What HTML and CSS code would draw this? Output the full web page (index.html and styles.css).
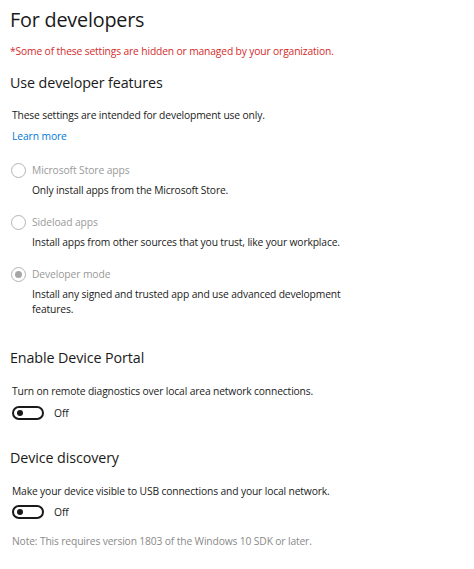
FILE: index.html
```html
<!DOCTYPE html>
<html>
<head>
<meta charset="utf-8">
<link rel="stylesheet" href="styles.css">
</head>
<body>
<div class="page">
  <h1 class="title">For developers</h1>
  <p class="warn">*Some of these settings are hidden or managed by your organization.</p>

  <h2 class="section">Use developer features</h2>
  <p class="text first">These settings are intended for development use only.</p>
  <a class="link">Learn more</a>

  <div class="options">
    <div class="option">
      <div class="radio-row"><span class="radio"></span><span class="rlabel">Microsoft Store apps</span></div>
      <p class="desc">Only install apps from the Microsoft Store.</p>
    </div>
    <div class="option">
      <div class="radio-row"><span class="radio"></span><span class="rlabel">Sideload apps</span></div>
      <p class="desc">Install apps from other sources that you trust, like your workplace.</p>
    </div>
    <div class="option">
      <div class="radio-row"><span class="radio checked"></span><span class="rlabel">Developer mode</span></div>
      <p class="desc">Install any signed and trusted app and use advanced development features.</p>
    </div>
  </div>

  <h2 class="section s2">Enable Device Portal</h2>
  <p class="text">Turn on remote diagnostics over local area network connections.</p>
  <div class="toggle-row portal"><span class="toggle"></span><span class="tlabel">Off</span></div>

  <h2 class="section s3">Device discovery</h2>
  <p class="text">Make your device visible to USB connections and your local network.</p>
  <div class="toggle-row"><span class="toggle"></span><span class="tlabel">Off</span></div>
  <p class="note">Note: This requires version 1803 of the Windows 10 SDK or later.</p>
</div>
</body>
</html>
```
FILE: styles.css
```css
html, body {
  margin: 0;
  padding: 0;
  background: #fff;
}
body {
  font-family: "Open Sans", "Noto Sans", sans-serif;
  color: #1a1a1a;
}
.page {
  padding: 0 10px;
  display: flex;
  flex-direction: column;
  align-items: flex-start;
}
.title {
  margin: 4px 0 0;
  font-size: 19.8px;
  font-weight: 400;
  line-height: 32px;
  letter-spacing: -0.2px;
}
.warn {
  margin: 7px 0 0;
  font-size: 10.3px;
  line-height: 16px;
  color: #d42a2a;
  letter-spacing: -0.15px;
}
.section {
  margin: 13px 0 0;
  font-size: 14.3px;
  font-weight: 400;
  line-height: 22px;
  letter-spacing: -0.1px;
}
.s2 { margin-top: 30px; }
.s3 { margin-top: 26px; }
.text {
  margin: 14px 0 0 2px;
  font-size: 10.3px;
  line-height: 16px;
  letter-spacing: -0.15px;
}
.text.first { margin-top: 13px; }
.link {
  margin: 5px 0 0 2px;
  font-size: 10.3px;
  line-height: 16px;
  color: #0078d7;
  letter-spacing: -0.1px;
}
.options {
  margin-top: 18px;
  display: flex;
  flex-direction: column;
  gap: 16px;
}
.option {
  display: flex;
  flex-direction: column;
}
.radio-row {
  display: flex;
  align-items: center;
  height: 16px;
}
.radio {
  border: 1.5px solid #b3b3b3;
  border-radius: 50%;
  margin-left: 1px;
  box-sizing: border-box;
  display: flex;
  align-items: center;
  justify-content: center;
  width: 15px;
  height: 15px;
}
.radio.checked::after {
  content: "";
  width: 7px;
  height: 7px;
  border-radius: 50%;
  background: #a6a6a6;
}
.rlabel {
  margin-left: 6px;
  font-size: 10.3px;
  color: #999;
  letter-spacing: -0.1px;
}
.desc {
  margin: 5px 0 0 22px;
  width: 320px;
  font-size: 10.3px;
  line-height: 15px;
  color: #1a1a1a;
  letter-spacing: -0.15px;
}
.toggle-row {
  margin: 5px 0 0 2px;
  display: flex;
  align-items: center;
  height: 16px;
}
.toggle-row.portal { margin-top: 6px; }
.toggle {
  width: 32px;
  height: 14px;
  box-sizing: border-box;
  border: 2px solid #1a1a1a;
  border-radius: 8px;
  display: flex;
  align-items: center;
  padding-left: 3px;
}
.toggle::after {
  content: "";
  width: 6px;
  height: 6px;
  border-radius: 50%;
  background: #1a1a1a;
}
.tlabel {
  margin-left: 10px;
  font-size: 10.3px;
  letter-spacing: -0.1px;
}
.note {
  margin: 13px 0 0 2px;
  font-size: 10.3px;
  line-height: 16px;
  color: #8a8a8a;
  letter-spacing: -0.15px;
}
```
